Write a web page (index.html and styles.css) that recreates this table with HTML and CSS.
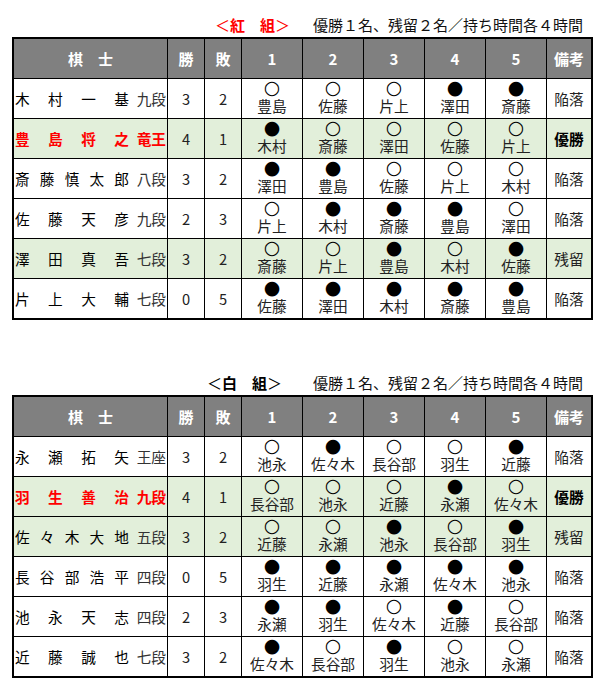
FILE: index.html
```html
<!DOCTYPE html>
<html lang="ja">
<head>
<meta charset="utf-8">
<link rel="stylesheet" href="styles.css">
</head>
<body>
<div class="page">
  <section class="league">
    <div class="caption">
      <span class="group red">＜<b>紅</b>　<b>組</b>＞</span>
      <span class="rule">優勝１名、残留２名／持ち時間各４時間</span>
    </div>
    <table class="grid">
      <thead>
        <tr>
          <th class="c-name">棋　士</th><th class="c-num">勝</th><th class="c-num">敗</th>
          <th class="c-res">1</th><th class="c-res">2</th><th class="c-res">3</th><th class="c-res">4</th><th class="c-res">5</th>
          <th class="c-note">備考</th>
        </tr>
      </thead>
      <tbody>
        <tr>
          <td class="player"><div class="pl"><span class="pn"><span>木</span><span>村</span><span>一</span><span>基</span></span><span class="rk">九段</span></div></td>
          <td>3</td><td>2</td>
          <td class="res"><div class="mk">○</div><div class="op">豊島</div></td>
          <td class="res"><div class="mk">○</div><div class="op">佐藤</div></td>
          <td class="res"><div class="mk">○</div><div class="op">片上</div></td>
          <td class="res"><div class="mk">●</div><div class="op">澤田</div></td>
          <td class="res"><div class="mk">●</div><div class="op">斎藤</div></td>
          <td class="note">陥落</td>
        </tr>
        <tr class="hl winner">
          <td class="player"><div class="pl"><span class="pn"><span>豊</span><span>島</span><span>将</span><span>之</span></span><span class="rk">竜王</span></div></td>
          <td>4</td><td>1</td>
          <td class="res"><div class="mk">●</div><div class="op">木村</div></td>
          <td class="res"><div class="mk">○</div><div class="op">斎藤</div></td>
          <td class="res"><div class="mk">○</div><div class="op">澤田</div></td>
          <td class="res"><div class="mk">○</div><div class="op">佐藤</div></td>
          <td class="res"><div class="mk">○</div><div class="op">片上</div></td>
          <td class="note win">優勝</td>
        </tr>
        <tr>
          <td class="player"><div class="pl"><span class="pn"><span>斎</span><span>藤</span><span>慎</span><span>太</span><span>郎</span></span><span class="rk">八段</span></div></td>
          <td>3</td><td>2</td>
          <td class="res"><div class="mk">●</div><div class="op">澤田</div></td>
          <td class="res"><div class="mk">●</div><div class="op">豊島</div></td>
          <td class="res"><div class="mk">○</div><div class="op">佐藤</div></td>
          <td class="res"><div class="mk">○</div><div class="op">片上</div></td>
          <td class="res"><div class="mk">○</div><div class="op">木村</div></td>
          <td class="note">陥落</td>
        </tr>
        <tr>
          <td class="player"><div class="pl"><span class="pn"><span>佐</span><span>藤</span><span>天</span><span>彦</span></span><span class="rk">九段</span></div></td>
          <td>2</td><td>3</td>
          <td class="res"><div class="mk">○</div><div class="op">片上</div></td>
          <td class="res"><div class="mk">●</div><div class="op">木村</div></td>
          <td class="res"><div class="mk">●</div><div class="op">斎藤</div></td>
          <td class="res"><div class="mk">●</div><div class="op">豊島</div></td>
          <td class="res"><div class="mk">○</div><div class="op">澤田</div></td>
          <td class="note">陥落</td>
        </tr>
        <tr class="hl">
          <td class="player"><div class="pl"><span class="pn"><span>澤</span><span>田</span><span>真</span><span>吾</span></span><span class="rk">七段</span></div></td>
          <td>3</td><td>2</td>
          <td class="res"><div class="mk">○</div><div class="op">斎藤</div></td>
          <td class="res"><div class="mk">○</div><div class="op">片上</div></td>
          <td class="res"><div class="mk">●</div><div class="op">豊島</div></td>
          <td class="res"><div class="mk">○</div><div class="op">木村</div></td>
          <td class="res"><div class="mk">●</div><div class="op">佐藤</div></td>
          <td class="note">残留</td>
        </tr>
        <tr>
          <td class="player"><div class="pl"><span class="pn"><span>片</span><span>上</span><span>大</span><span>輔</span></span><span class="rk">七段</span></div></td>
          <td>0</td><td>5</td>
          <td class="res"><div class="mk">●</div><div class="op">佐藤</div></td>
          <td class="res"><div class="mk">●</div><div class="op">澤田</div></td>
          <td class="res"><div class="mk">●</div><div class="op">木村</div></td>
          <td class="res"><div class="mk">●</div><div class="op">斎藤</div></td>
          <td class="res"><div class="mk">●</div><div class="op">豊島</div></td>
          <td class="note">陥落</td>
        </tr>
      </tbody>
    </table>
  </section>

  <section class="league second">
    <div class="caption">
      <span class="group white">＜<b>白</b>　<b>組</b>＞</span>
      <span class="rule">優勝１名、残留２名／持ち時間各４時間</span>
    </div>
    <table class="grid">
      <thead>
        <tr>
          <th class="c-name">棋　士</th><th class="c-num">勝</th><th class="c-num">敗</th>
          <th class="c-res">1</th><th class="c-res">2</th><th class="c-res">3</th><th class="c-res">4</th><th class="c-res">5</th>
          <th class="c-note">備考</th>
        </tr>
      </thead>
      <tbody>
        <tr>
          <td class="player"><div class="pl"><span class="pn"><span>永</span><span>瀬</span><span>拓</span><span>矢</span></span><span class="rk">王座</span></div></td>
          <td>3</td><td>2</td>
          <td class="res"><div class="mk">○</div><div class="op">池永</div></td>
          <td class="res"><div class="mk">●</div><div class="op">佐々木</div></td>
          <td class="res"><div class="mk">○</div><div class="op">長谷部</div></td>
          <td class="res"><div class="mk">○</div><div class="op">羽生</div></td>
          <td class="res"><div class="mk">●</div><div class="op">近藤</div></td>
          <td class="note">陥落</td>
        </tr>
        <tr class="hl winner">
          <td class="player"><div class="pl"><span class="pn"><span>羽</span><span>生</span><span>善</span><span>治</span></span><span class="rk">九段</span></div></td>
          <td>4</td><td>1</td>
          <td class="res"><div class="mk">○</div><div class="op">長谷部</div></td>
          <td class="res"><div class="mk">○</div><div class="op">池永</div></td>
          <td class="res"><div class="mk">○</div><div class="op">近藤</div></td>
          <td class="res"><div class="mk">●</div><div class="op">永瀬</div></td>
          <td class="res"><div class="mk">○</div><div class="op">佐々木</div></td>
          <td class="note win">優勝</td>
        </tr>
        <tr class="hl">
          <td class="player"><div class="pl"><span class="pn"><span>佐</span><span>々</span><span>木</span><span>大</span><span>地</span></span><span class="rk">五段</span></div></td>
          <td>3</td><td>2</td>
          <td class="res"><div class="mk">○</div><div class="op">近藤</div></td>
          <td class="res"><div class="mk">○</div><div class="op">永瀬</div></td>
          <td class="res"><div class="mk">●</div><div class="op">池永</div></td>
          <td class="res"><div class="mk">○</div><div class="op">長谷部</div></td>
          <td class="res"><div class="mk">●</div><div class="op">羽生</div></td>
          <td class="note">残留</td>
        </tr>
        <tr>
          <td class="player"><div class="pl"><span class="pn"><span>長</span><span>谷</span><span>部</span><span>浩</span><span>平</span></span><span class="rk">四段</span></div></td>
          <td>0</td><td>5</td>
          <td class="res"><div class="mk">●</div><div class="op">羽生</div></td>
          <td class="res"><div class="mk">●</div><div class="op">近藤</div></td>
          <td class="res"><div class="mk">●</div><div class="op">永瀬</div></td>
          <td class="res"><div class="mk">●</div><div class="op">佐々木</div></td>
          <td class="res"><div class="mk">●</div><div class="op">池永</div></td>
          <td class="note">陥落</td>
        </tr>
        <tr>
          <td class="player"><div class="pl"><span class="pn"><span>池</span><span>永</span><span>天</span><span>志</span></span><span class="rk">四段</span></div></td>
          <td>2</td><td>3</td>
          <td class="res"><div class="mk">●</div><div class="op">永瀬</div></td>
          <td class="res"><div class="mk">●</div><div class="op">羽生</div></td>
          <td class="res"><div class="mk">○</div><div class="op">佐々木</div></td>
          <td class="res"><div class="mk">●</div><div class="op">近藤</div></td>
          <td class="res"><div class="mk">○</div><div class="op">長谷部</div></td>
          <td class="note">陥落</td>
        </tr>
        <tr>
          <td class="player"><div class="pl"><span class="pn"><span>近</span><span>藤</span><span>誠</span><span>也</span></span><span class="rk">七段</span></div></td>
          <td>3</td><td>2</td>
          <td class="res"><div class="mk">●</div><div class="op">佐々木</div></td>
          <td class="res"><div class="mk">○</div><div class="op">長谷部</div></td>
          <td class="res"><div class="mk">●</div><div class="op">羽生</div></td>
          <td class="res"><div class="mk">○</div><div class="op">池永</div></td>
          <td class="res"><div class="mk">○</div><div class="op">永瀬</div></td>
          <td class="note">陥落</td>
        </tr>
      </tbody>
    </table>
  </section>
</div>
</body>
</html>
```
FILE: styles.css
```css
html, body {
  margin: 0;
  padding: 0;
  background: #ffffff;
}
body {
  font-family: "Noto Sans CJK JP", "Noto Sans", sans-serif;
  font-size: 14.67px;
  color: #222;
}
.page {
  padding: 15px 0 0 12px;
}
.league.second {
  margin-top: 53px;
}
.caption {
  display: flex;
  width: 581px;
  height: 20px;
  line-height: 20px;
  font-size: 15px;
  margin-bottom: 2px;
  color: #111;
}
.caption b {
  font-weight: bold;
}
.group.red {
  color: #ff0000;
  margin-left: 203px;
}
.group.white {
  color: #000;
  margin-left: 195px;
}
.rule {
  margin-left: auto;
  margin-right: 10px;
}
.grid {
  box-sizing: border-box;
  width: 581px;
  table-layout: fixed;
  border-collapse: separate;
  border-spacing: 0;
  border: 2px solid #000;
}
.grid th, .grid td {
  box-sizing: border-box;
  height: 40px;
  padding: 0;
  border-right: 1px solid #000;
  border-bottom: 1px solid #000;
  text-align: center;
  vertical-align: middle;
}
.grid th:last-child, .grid td:last-child {
  border-right: 0;
}
.grid tbody tr:last-child td {
  border-bottom: 0;
  height: 39px;
}
.grid th {
  background: #808080;
  color: #ffffff;
  font-weight: bold;
  font-size: 15px;
}
.c-name { width: 154px; }
.c-num { width: 37px; }
.c-res { width: 61px; }
.c-note { width: 44px; }

.hl td {
  background: #e2efda;
}
.player {
  text-align: left;
}
.pl {
  display: flex;
  justify-content: space-between;
  align-items: center;
  padding: 0 1px 0 1px;
  color: #000;
}
.pn {
  display: flex;
  justify-content: space-between;
  width: 114px;
}
.rk {
  color: #333;
}
.winner .pl, .winner .rk {
  color: #ff0000;
  font-weight: bold;
}
.grid td.res {
  vertical-align: top;
}
.mk {
  height: 17px;
  line-height: 17px;
  color: #000;
  font-family: "DejaVu Sans", sans-serif;
  font-size: 19px;
}
.op {
  padding-top: 1px;
  height: 21px;
  line-height: 21px;
  font-family: "Liberation Sans", "Noto Sans CJK JP", sans-serif;
}
.note.win {
  font-weight: bold;
  color: #000;
}
```
